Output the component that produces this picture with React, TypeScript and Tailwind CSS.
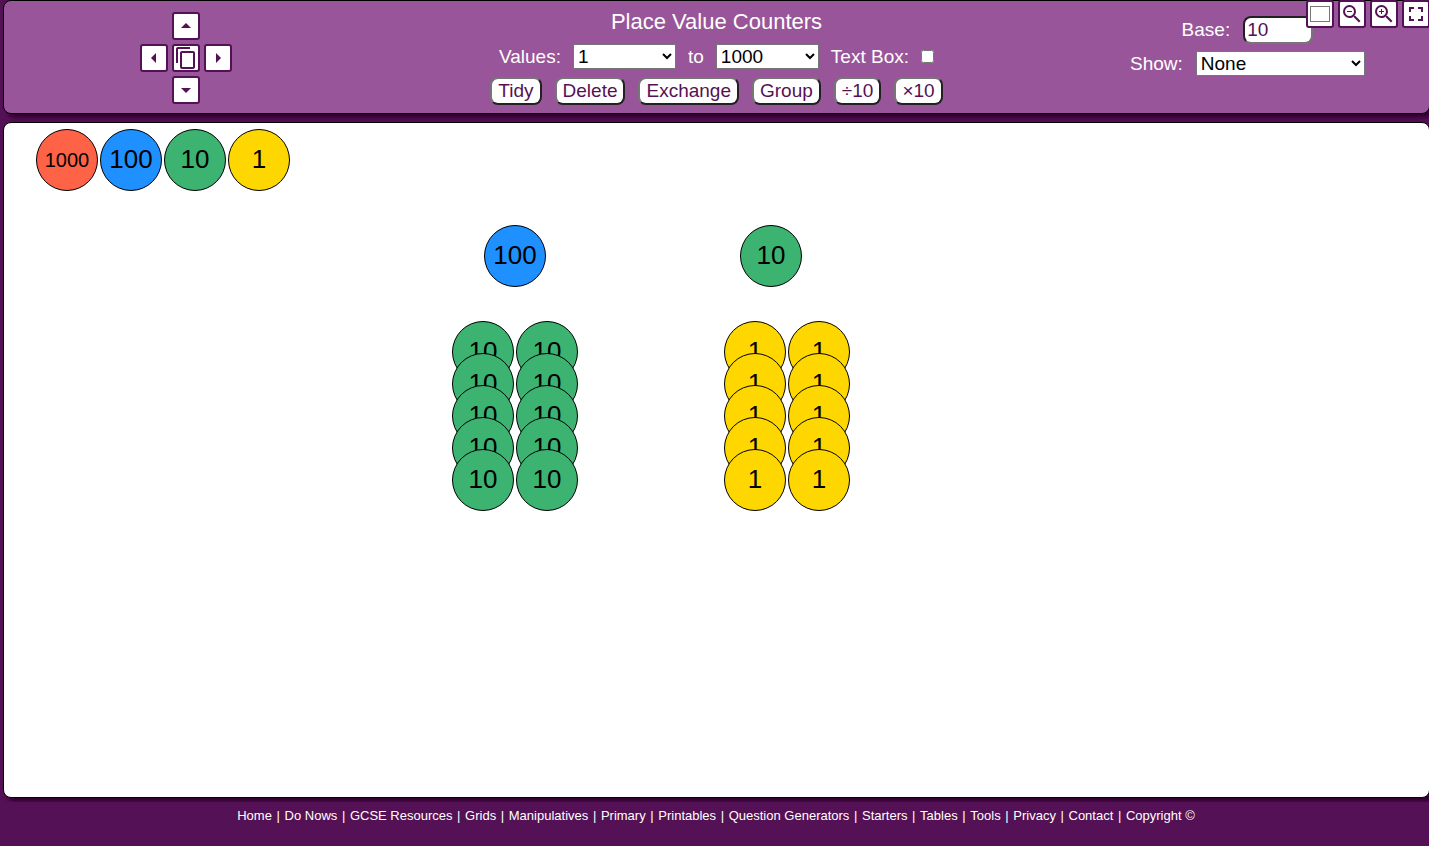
import { ReactNode, useState } from "react";
import {
  MdArrowDropDown,
  MdArrowDropUp,
  MdArrowLeft,
  MdArrowRight,
  MdContentCopy,
  MdFullscreen,
  MdZoomIn,
  MdZoomOut,
} from "react-icons/md";

type CounterItem = { value: number; x: number; y: number };

const counterStyles: Record<number, string> = {
  1: "bg-[#ffd700] pb-0.5 text-[26px]",
  10: "bg-[#3cb371] pb-0.5 text-[26px]",
  100: "bg-[#1e90ff] pb-0.5 text-[26px]",
  1000: "bg-[#ff6347] text-[20px]",
};

const values = [1000, 100, 10, 1];

const stack = (value: number, x: number, y: number): CounterItem[] =>
  [0, 1, 2, 3, 4].map((i) => ({ value, x, y: y + i * 32 }));

const counters: CounterItem[] = [
  { value: 100, x: 480, y: 102 },
  { value: 10, x: 736, y: 102 },
  ...stack(10, 448, 198),
  ...stack(10, 512, 198),
  ...stack(1, 720, 198),
  ...stack(1, 784, 198),
];

const actions = ["Tidy", "Delete", "Exchange", "Group", "÷10", "×10"];

const footerLinks = [
  "Home",
  "Do Nows",
  "GCSE Resources",
  "Grids",
  "Manipulatives",
  "Primary",
  "Printables",
  "Question Generators",
  "Starters",
  "Tables",
  "Tools",
  "Privacy",
  "Contact",
  "Copyright ©",
];

const Counter = ({ value }: { value: number }) => (
  <div
    className={`flex size-[62px] items-center justify-center rounded-full border border-black text-black ${counterStyles[value]}`}
  >
    {value}
  </div>
);

const IconButton = ({
  label,
  className = "",
  children,
}: {
  label: string;
  className?: string;
  children: ReactNode;
}) => (
  <button
    aria-label={label}
    className={`flex size-7 items-center justify-center rounded-[3px] border-2 border-[#551155] bg-white text-[#551155] ${className}`}
  >
    {children}
  </button>
);

const App = () => {
  const [from, setFrom] = useState("1");
  const [to, setTo] = useState("1000");
  const [base, setBase] = useState("10");
  const [show, setShow] = useState("None");
  const [textBox, setTextBox] = useState(false);

  return (
    <div className="flex min-h-screen flex-col overflow-hidden bg-[#551155] pl-[3px] font-['Liberation_Sans',Arial,sans-serif] text-[19px] leading-7 text-white">
      <header className="relative -mr-px grid grid-cols-[26fr_50fr_26fr] rounded-lg border border-black bg-[#995599] pb-[5px] shadow-[4px_4px_4px_#330033]">
        <div className="flex justify-center pt-[11px]">
          <div className="grid grid-cols-3 gap-1 self-start">
            <IconButton label="Up" className="col-start-2">
              <MdArrowDropUp size={24} />
            </IconButton>
            <IconButton label="Left" className="col-start-1">
              <MdArrowLeft size={24} />
            </IconButton>
            <IconButton label="Copy">
              <MdContentCopy size={24} />
            </IconButton>
            <IconButton label="Right">
              <MdArrowRight size={24} />
            </IconButton>
            <IconButton label="Down" className="col-start-2">
              <MdArrowDropDown size={24} />
            </IconButton>
          </div>
        </div>

        <div className="flex flex-col items-center pt-1">
          <h1 className="flex h-[34px] items-center text-[22px]">
            Place Value Counters
          </h1>
          <div className="flex h-[35px] items-center gap-3">
            <label htmlFor="from">Values:</label>
            <select
              id="from"
              value={from}
              onChange={(e) => setFrom(e.target.value)}
              className="h-[25px] w-[103px] border border-[#767676] bg-white text-black"
            >
              <option>1</option>
              <option>10</option>
              <option>100</option>
            </select>
            <label htmlFor="to">to</label>
            <select
              id="to"
              value={to}
              onChange={(e) => setTo(e.target.value)}
              className="h-[25px] w-[103px] border border-[#767676] bg-white text-black"
            >
              <option>10</option>
              <option>100</option>
              <option>1000</option>
            </select>
            <label htmlFor="textbox">Text Box:</label>
            <input
              id="textbox"
              type="checkbox"
              checked={textBox}
              onChange={(e) => setTextBox(e.target.checked)}
              className="size-[13px]"
            />
          </div>
          <div className="flex h-[34px] items-center gap-[13px]">
            {actions.map((action) => (
              <button
                key={action}
                className="h-7 rounded-lg border-2 border-t-[#767676] border-r-[#212121] border-b-[#212121] border-l-[#767676] bg-white px-1.5 leading-6 text-[#551155]"
              >
                {action}
              </button>
            ))}
          </div>
        </div>

        <div className="flex flex-col items-center pt-3">
          <div className="flex h-[34px] items-center gap-[13px]">
            <label htmlFor="base">Base:</label>
            <input
              id="base"
              type="text"
              value={base}
              onChange={(e) => setBase(e.target.value)}
              className="h-7 w-[70px] rounded-lg border-2 border-t-[#212121] border-r-[#767676] border-b-[#767676] border-l-[#212121] bg-white px-0.5 text-[#551155]"
            />
          </div>
          <div className="flex h-[33px] items-center gap-[13px]">
            <label htmlFor="show">Show:</label>
            <select
              id="show"
              value={show}
              onChange={(e) => setShow(e.target.value)}
              className="h-[25px] w-[169px] border border-[#767676] bg-white text-black"
            >
              <option>None</option>
              <option>Total</option>
              <option>Column totals</option>
            </select>
          </div>
        </div>

        <div className="absolute -top-px -right-px flex gap-1">
          <input
            type="color"
            aria-label="Background colour"
            defaultValue="#ffffff"
            className="size-7 rounded-[3px] border-2 border-[#551155] bg-white"
          />
          <IconButton label="Zoom out">
            <MdZoomOut size={24} />
          </IconButton>
          <IconButton label="Zoom in">
            <MdZoomIn size={24} />
          </IconButton>
          <IconButton label="Full screen">
            <MdFullscreen size={24} />
          </IconButton>
        </div>
      </header>

      <main className="relative mt-2 -mr-px flex-1 rounded-lg border border-black bg-white shadow-[4px_4px_4px_#330033]">
        <div className="flex gap-0.5 pt-1.5 pl-8">
          {values.map((value) => (
            <Counter key={value} value={value} />
          ))}
        </div>
        {counters.map(({ value, x, y }) => (
          <div key={`${x}-${y}`} className="absolute" style={{ left: x, top: y }}>
            <Counter value={value} />
          </div>
        ))}
      </main>

      <footer className="relative mt-1 h-11 bg-[#551155] pt-1 text-center text-[13px] leading-5">
        {footerLinks.map((link, i) => (
          <span key={link}>
            {i > 0 && <span className="mx-px"> | </span>}
            <a href="#">{link}</a>
          </span>
        ))}
      </footer>
    </div>
  );
};

export default App;
